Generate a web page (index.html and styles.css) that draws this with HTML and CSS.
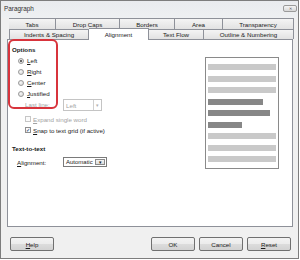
FILE: index.html
```html
<!DOCTYPE html>
<html>
<head>
<meta charset="utf-8">
<link rel="stylesheet" href="styles.css">
</head>
<body>
<div class="window">
  <div class="titlebar">
    <span class="title">Paragraph</span>
    <span class="close">✕</span>
  </div>
  <div class="tabs">
    <div class="tabrow row1">
      <div class="tab">Tabs</div>
      <div class="tab">Drop Caps</div>
      <div class="tab">Borders</div>
      <div class="tab">Area</div>
      <div class="tab">Transparency</div>
    </div>
    <div class="tabrow row2">
      <div class="tab">Indents &amp; Spacing</div>
      <div class="tab active">Alignment</div>
      <div class="tab">Text Flow</div>
      <div class="tab">Outline &amp; Numbering</div>
    </div>
  </div>
  <div class="panel">
    <div class="highlight"></div>
    <div class="col">
      <div class="heading">Options</div>
      <div class="opt"><span class="radio checked"></span><span><u>L</u>eft</span></div>
      <div class="opt"><span class="radio"></span><span><u>R</u>ight</span></div>
      <div class="opt"><span class="radio"></span><span><u>C</u>enter</span></div>
      <div class="opt"><span class="radio"></span><span><u>J</u>ustified</span></div>
      <div class="field lastline">
        <span class="label disabled"><u>L</u>ast line:</span>
        <span class="select disabled sel-left"><span class="val">Left</span><span class="arrow">▾</span></span>
      </div>
      <div class="check disabled"><span class="box"></span><span><u>E</u>xpand single word</span></div>
      <div class="check snap"><span class="box checked">✓</span><span><u>S</u>nap to text grid (if active)</span></div>
      <div class="heading tt">Text-to-text</div>
      <div class="field align">
        <span class="label"><u>A</u>lignment:</span>
        <span class="select sel-auto"><span class="val">Automatic</span><span class="arrow btn">▾</span></span>
      </div>
    </div>
    <div class="preview">
      <div class="line"></div>
      <div class="line"></div>
      <div class="line"></div>
      <div class="line dark w1"></div>
      <div class="line dark w2"></div>
      <div class="line dark w3"></div>
      <div class="line"></div>
      <div class="line"></div>
      <div class="line"></div>
    </div>
  </div>
  <div class="footer">
    <button class="btn-d"><u>H</u>elp</button>
    <div class="spacer"></div>
    <button class="btn-d">OK</button>
    <button class="btn-d narrow">Cancel</button>
    <button class="btn-d"><u>R</u>eset</button>
  </div>
</div>
</body>
</html>
```
FILE: styles.css
```css
html, body {
  margin: 0;
  padding: 0;
  background: #ffffff;
}
body {
  font-family: "Liberation Sans", Arial, sans-serif;
  font-size: 6.2px;
  color: #1a1a1a;
}
u { text-decoration: underline; text-underline-offset: 0.5px; }
.window {
  width: 299px;
  height: 259px;
  box-sizing: border-box;
  border: 1px solid #7d7d7d;
  background: #f0f0f0;
  display: flex;
  flex-direction: column;
}
.titlebar {
  height: 17px;
  flex: none;
  display: flex;
  align-items: center;
  justify-content: space-between;
  padding: 0 1px 0 3px;
  background: linear-gradient(#e9ebee, #eef0f2);
}
.title {
  font-size: 6.4px;
  color: #303030;
  margin-top: -2px;
}
.close {
  width: 14px;
  height: 7px;
  box-sizing: border-box;
  border: 1px solid #9a9a9a;
  border-radius: 2px;
  background: linear-gradient(#f4f4f4, #d8d8d8);
  font-size: 4px;
  line-height: 5px;
  text-align: center;
  color: #555;
  margin-top: -2px;
}
.tabs {
  margin-left: 8px;
  width: 284px;
  flex: none;
}
.tabrow {
  display: grid;
  border-left: 1px solid #8e9199;
  box-sizing: border-box;
}
.row1 {
  grid-template-columns: 46px 64px 55px 48px 71px;
  height: 11px;
}
.row2 {
  grid-template-columns: 79px 60px 55px 90px;
  height: 10px;
}
.tab {
  box-sizing: border-box;
  border-top: 1px solid #8e9199;
  border-right: 1px solid #8e9199;
  background: linear-gradient(#f4f4f4, #e2e2e2);
  display: flex;
  align-items: center;
  justify-content: center;
  white-space: nowrap;
}
.row1 .tab:first-child { margin-left: -1px; }
.tab.active {
  background: #ffffff;
  margin-top: -1px;
  margin-bottom: -1px;
  position: relative;
  z-index: 2;
}
.panel {
  position: relative;
  margin-left: 6px;
  width: 286px;
  height: 188px;
  box-sizing: border-box;
  border: 1px solid #8e9199;
  background: #ffffff;
  display: flex;
  flex: none;
}
.highlight {
  position: absolute;
  left: 0;
  top: -1px;
  width: 50px;
  height: 70px;
  box-sizing: border-box;
  border: 2px solid #d8343c;
  border-radius: 6px;
  z-index: 3;
}
.col {
  width: 196px;
  flex: none;
  padding: 4px 0 0 4px;
  box-sizing: border-box;
}
.heading {
  height: 11px;
  display: flex;
  align-items: center;
  font-weight: bold;
}
.heading.tt { margin-top: 8px; }
.opt {
  height: 11px;
  display: flex;
  align-items: center;
  padding-left: 6px;
  gap: 3px;
}
.radio {
  width: 6px;
  height: 6px;
  border-radius: 50%;
  box-sizing: border-box;
  border: 1px solid #9a9a9a;
  background: radial-gradient(circle at 40% 40%, #f6f6f6, #d3d3d3);
  position: relative;
}
.radio.checked::after {
  content: "";
  position: absolute;
  left: 1px;
  top: 1px;
  width: 2px;
  height: 2px;
  border-radius: 50%;
  background: #3a3a3a;
}
.field {
  display: flex;
  align-items: center;
}
.lastline {
  height: 12px;
  padding-left: 13px;
}
.lastline .label { width: 38px; margin-top: -2px; }
.align {
  height: 10px;
  margin-top: 3px;
  padding-left: 5px;
}
.align .label { width: 46px; }
.disabled { color: #a3a3a3; }
.select {
  display: flex;
  align-items: stretch;
  box-sizing: border-box;
  border: 1px solid #7a7a7a;
  background: #fff;
  height: 100%;
}
.select .val {
  flex: 1;
  display: flex;
  align-items: center;
  padding-left: 2px;
}
.sel-left {
  width: 39px;
  border-color: #c4c4c4;
}
.sel-left .arrow {
  width: 7px;
  border-left: 1px solid #d0d0d0;
  color: #b0b0b0;
  font-size: 5px;
  display: flex;
  align-items: center;
  justify-content: center;
}
.sel-auto {
  width: 44px;
  color: #1a1a1a;
}
.sel-auto .val { font-size: 6px; }
.sel-auto .arrow.btn {
  width: 8px;
  margin: 1px;
  border: 1px solid #8a8a8a;
  background: linear-gradient(#f5f5f5, #dcdcdc);
  font-size: 5px;
  color: #222;
  display: flex;
  align-items: center;
  justify-content: center;
}
.check {
  height: 10px;
  display: flex;
  align-items: center;
  padding-left: 13px;
  gap: 2px;
  margin-top: 1px;
}
.check.disabled { margin-top: 3px; }
.box {
  width: 6px;
  height: 6px;
  box-sizing: border-box;
  border: 1px solid #c6c6c6;
  background: #fbfbfb;
  font-size: 5px;
  line-height: 4px;
  text-align: center;
}
.box.checked {
  border-color: #8e8e8e;
  color: #2a4a7a;
  font-weight: bold;
}
.preview {
  margin-top: 17px;
  margin-left: 1px;
  width: 74px;
  height: 112px;
  box-sizing: border-box;
  border: 1px solid #8a8a8a;
  padding: 6px 1px 0 2px;
  display: flex;
  flex-direction: column;
  gap: 5.5px;
  flex: none;
}
.line {
  height: 6px;
  width: 68px;
  background: #c9c9c9;
  flex: none;
}
.line.dark { background: #878787; }
.line.w1 { width: 55px; }
.line.w2 { width: 62px; }
.line.w3 { width: 34px; }
.footer {
  display: flex;
  align-items: center;
  margin-top: 10px;
  padding: 0 7px 0 9px;
  gap: 4px;
}
.spacer { flex: 1; }
.btn-d {
  width: 44px;
  height: 14px;
  box-sizing: border-box;
  border: 1px solid #707070;
  border-radius: 2px;
  background: linear-gradient(#f3f3f3 0%, #ebebeb 50%, #dcdcdc 51%, #d2d2d2 100%);
  font-family: "Liberation Sans", Arial, sans-serif;
  font-size: 6.2px;
  color: #1a1a1a;
  padding: 0;
}
.btn-d.narrow { width: 44px; }
```
